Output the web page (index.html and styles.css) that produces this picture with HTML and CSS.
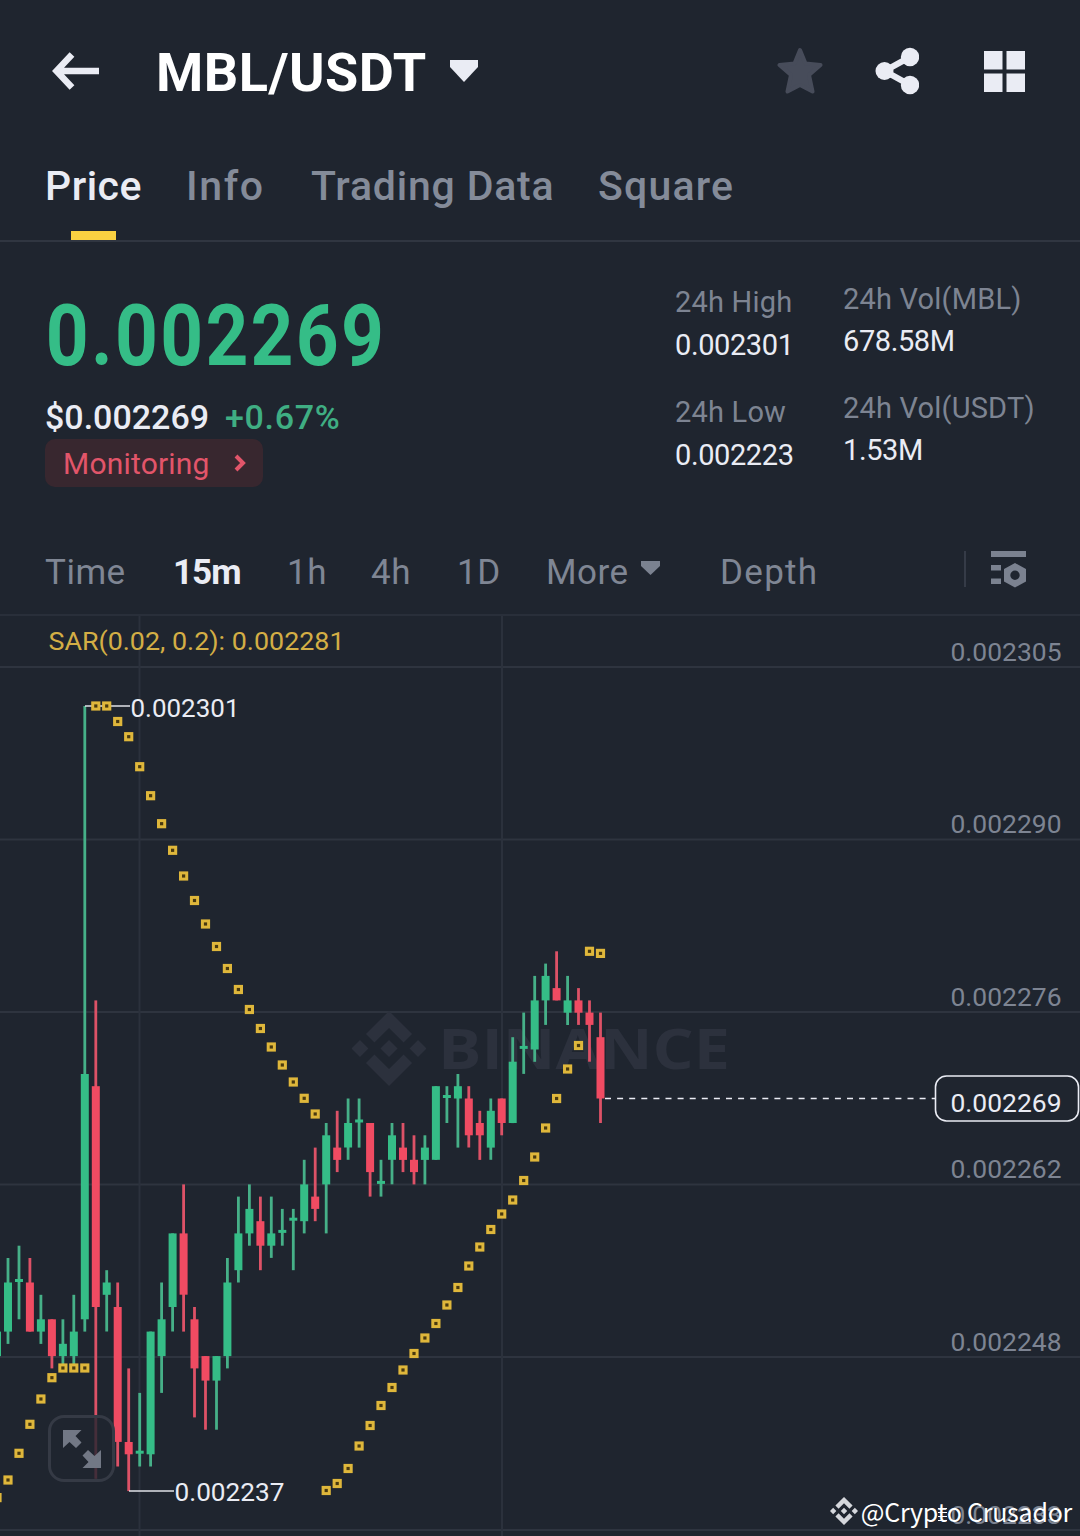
FILE: index.html
```
<!DOCTYPE html>
<html lang="en">
<head>
    <meta charset="UTF-8">
    <title>MBL/USDT</title>
    <link rel="stylesheet" href="styles.css">
</head>

<body>
<div class="header">
    <svg class="back" width="48" height="40" viewBox="0 0 48 40">
        <path d="M20 3.500 4.500 20 20 36.500M4 20h43" fill="none" stroke="#eaecf4" stroke-width="6.500"/>
    </svg>
    <h1 class="pair">MBL/USDT</h1>
    <svg class="caret" width="28" height="22" viewBox="0 0 28 22">
        <path d="M0 0h28v7L14 22 0 7z" fill="#eaecf4"/>
    </svg>
    <svg class="star" width="46" height="48" viewBox="0 0 46 48">
        <path d="M23 3l5.500 13.500 15 1.500-11.500 10 3.500 16.500L23 38l-12.500 6.500L14 28 2.500 18l15-1.500z" fill="#474c5a" stroke="#474c5a" stroke-width="4" stroke-linejoin="round"/>
    </svg>
    <svg class="share" width="44" height="48" viewBox="0 0 44 48">
        <path d="M35 10 9.500 24 35 38" fill="none" stroke="#eaecf4" stroke-width="6"/>
        <circle cx="9.500" cy="24" r="9" fill="#eaecf4"/>
        <circle cx="35" cy="10" r="9.200" fill="#eaecf4"/>
        <circle cx="35" cy="38" r="9.200" fill="#eaecf4"/>
    </svg>
    <svg class="grid" width="41" height="41" viewBox="0 0 41 41">
        <path d="M0 0h18.500v18.500H0zM22.500 0H41v18.500H22.500zM0 22.500h18.500V41H0zM22.500 22.500H41V41H22.500z" fill="#eaecf4"/>
    </svg>
</div>

<ul class="tabs">
    <li class="cur">Price</li>
    <li class="info">Info</li>
    <li class="trading">Trading Data</li>
    <li class="square">Square</li>
</ul>

<div class="ticker">
    <div class="left">
        <p class="price">0.002269</p>
        <p class="fiat"><span class="usd">$0.002269</span><span class="change">+0.67%</span></p>
        <a class="tag" href="javascript:;">Monitoring
            <svg width="12" height="18" viewBox="0 0 12 18">
                <path d="M2 2l7 7-7 7" fill="none" stroke="#e2556a" stroke-width="4"/>
            </svg>
        </a>
    </div>
    <dl class="range">
        <dt>24h High</dt>
        <dd>0.002301</dd>
        <dt>24h Low</dt>
        <dd>0.002223</dd>
    </dl>
    <dl class="vol">
        <dt>24h Vol(MBL)</dt>
        <dd>678.58M</dd>
        <dt>24h Vol(USDT)</dt>
        <dd>1.53M</dd>
    </dl>
</div>

<ul class="times">
    <li class="t-time">Time</li>
    <li class="t-15m cur">15m</li>
    <li class="t-1h">1h</li>
    <li class="t-4h">4h</li>
    <li class="t-1d">1D</li>
    <li class="t-more">More
        <svg width="19" height="14" viewBox="0 0 19 14"><path d="M0 0h19v5l-9.500 9L0 5z" fill="#7b8290"/></svg>
    </li>
    <li class="t-depth">Depth</li>
    <li class="setting">
        <svg width="35" height="37" viewBox="0 0 35 37">
            <path d="M0 0h35v6H0zM0 14h10v5.500H0zM0 27.500h10V33H0z" fill="#7b8290"/>
            <path d="M24 12l11 6v12.500l-11 6-11-6V18zM24 19.500a4.700 4.700 0 1 0 0 9.400 4.700 4.700 0 0 0 0-9.400z" fill="#7b8290" fill-rule="evenodd"/>
        </svg>
    </li>
</ul>

<div class="chart">
    <svg id="kline" width="1080" height="920" viewBox="0 616 1080 920"></svg>
    <a class="expand" href="javascript:;">
        <svg width="38" height="38" viewBox="0 0 38 38">
            <path d="M0 0h18.500l-6 6 6 6.500-5.500 5.500-6.500-6L0 18zM38 38H19.500l6-6-6-6.500 5.500-5.500 6.500 6 6.500-6z" fill="#727885"/>
        </svg>
    </a>
    <p class="author">
        <svg width="28" height="28" viewBox="0 0 126.600 126.600"><use href="#logo" fill="#d5d7dc"/></svg>
        <span>@Cryp<span class="t">t</span>o Crusador</span>
    </p>
</div>

<script>
    var okline=document.getElementById("kline");
    var green="#35bd87";
    var red="#f04b62";
    var step=10.972;
    var html="";

    // body top, body bottom, high, low, 1 = up / 0 = down
    var candles=[
        [2250,2248,2250,2248,1],
        [2254,2250,2256,2249,1],
        [2254,2254,2257,2251,1],
        [2254,2250,2256,2250,0],
        [2251,2250,2253,2249,1],
        [2251,2248,2251,2247,0],
        [2249,2248,2251,2247,1],
        [2250,2248,2253,2247,1],
        [2271,2251,2301,2250,1],
        [2270,2252,2277,2238,0],
        [2254,2253,2255,2250,1],
        [2252,2241,2254,2239,0],
        [2241,2240,2247,2237,0],
        [2240,2240,2245,2239,1],
        [2250,2240,2250,2239,1],
        [2251,2248,2254,2245,1],
        [2258,2252,2258,2250,1],
        [2258,2253,2262,2250,0],
        [2251,2247,2252,2243,0],
        [2248,2246,2248,2242,0],
        [2248,2246,2248,2242,1],
        [2254,2248,2256,2247,1],
        [2258,2255,2261,2254,1],
        [2260,2258,2262,2257,1],
        [2259,2257,2261,2255,0],
        [2258,2257,2261,2256,1],
        [2258,2258,2260,2257,1],
        [2259,2259,2260,2255,1],
        [2262,2259,2264,2258,1],
        [2261,2260,2265,2259,0],
        [2266,2262,2267,2258,1],
        [2265,2264,2268,2263,0],
        [2267,2265,2269,2264,1],
        [2267,2267,2269,2265,1],
        [2267,2263,2267,2261,0],
        [2262,2262,2264,2261,1],
        [2266,2264,2267,2262,1],
        [2265,2264,2267,2263,0],
        [2264,2263,2266,2262,0],
        [2265,2264,2266,2262,1],
        [2270,2264,2270,2264,1],
        [2269,2269,2270,2267,1],
        [2270,2269,2271,2265,1],
        [2269,2266,2270,2265,0],
        [2267,2266,2268,2264,0],
        [2268,2265,2269,2264,1],
        [2269,2267,2269,2266,0],
        [2272,2267,2274,2267,1],
        [2273,2273,2276,2271,1],
        [2277,2273,2279,2272,1],
        [2279,2277,2280,2275,1],
        [2278,2277,2281,2277,0],
        [2277,2276,2279,2275,1],
        [2277,2276,2278,2275,0],
        [2276,2275,2277,2272,0],
        [2274,2269,2276,2267,0]
    ];
    var sar=[
        1497.6,1480,1453.3,1424.3,1399,1377.7,1368,1368,1368,
        706,706,721.5,736.7,766.7,795.7,823.7,850.3,876,900.5,924,946.5,968.5,989.5,
        1009.5,1028.5,1047,1065,1082,1098.3,1114,
        1490.5,1483.5,1468.5,1446,1425.5,1405.5,1387.5,1370,1353.5,1338,1323.5,1305,
        1287.5,1266,1247,1229.5,1214,1200,1180.5,1157,1128,1098.5,1069,1045.5,
        951.3,953.4
    ];
    var axis=[
        ["0.002305",667],
        ["0.002290",839.5],
        ["0.002276",1012],
        ["0.002262",1184.5],
        ["0.002248",1357],
        ["0.002233",1530]
    ];

    function getX(i) {
        return 8+(i-1)*step;
    }
    function getY(p) {
        return 706+(2301-p)*12.266;
    }
    function rect(x,y,w,h,color) {
        return '<rect x="'+x.toFixed(1)+'" y="'+y.toFixed(1)+'" width="'+w+'" height="'+h.toFixed(1)+'" fill="'+color+'"/>';
    }
    function text(str,x,y,w,cls) {
        return '<text class="'+cls+'" x="'+x+'" y="'+y+'" textLength="'+w+'" lengthAdjust="spacingAndGlyphs">'+str+'</text>';
    }

    // grid
    for(var i=0;i<axis.length;i++){
        html+=rect(0,axis[i][1]-1,1080,2,"#2e343f");
        html+=text(axis[i][0],950.5,axis[i][1]-6.5,111,"axis");
    }
    html+=rect(138.5,616,2,920,"#2b313c")+rect(501,616,2,920,"#2b313c");

    // watermark
    html+='<symbol id="logo" viewBox="0 0 126.600 126.600"><path d="M38.730 53.200l24.590-24.580 24.600 24.600 14.300-14.310L63.320 0l-38.900 38.900zM0 63.310l14.300-14.310 14.310 14.310-14.310 14.300zM38.730 73.410l24.590 24.590 24.600-24.600 14.310 14.290-38.900 38.910-38.910-38.880zM98 63.310l14.300-14.310 14.310 14.300-14.310 14.320zM77.830 63.300l-14.510-14.520-14.500 14.520 14.500 14.500z"/></symbol>';
    html+='<use href="#logo" x="351.500" y="1011" width="75" height="75" fill="#2c313d"/>';
    html+=text("BINANCE",438,1069,292,"mark");

    // candles
    for(var i=0;i<candles.length;i++){
        var c=candles[i];
        var color=c[4]?green:red;
        var y=getY(c[0]);
        var h=getY(c[1])-y;
        if(h==0){
            y-=3.5;
            h=3;
        }
        html+=rect(getX(i)-1.4,getY(c[2]),2.8,getY(c[3])-getY(c[2]),c[4]?"#46b088":"#dd5267");
        html+=rect(getX(i)-4,y,8,h,color);
    }

    html+='<path class="tip" d="M85 706h45M129 1491h45"/>';
    // sar
    for(var i=0;i<sar.length;i++){
        html+='<rect class="sar" x="'+(getX(i)-3.1).toFixed(1)+'" y="'+(sar[i]-3.1).toFixed(1)+'" width="6.200" height="6.200"/>';
    }

    html+=text("SAR(0.02, 0.2): 0.002281",48.5,649.5,296,"sar-text");
    html+=text("0.002301",130.5,716.5,109,"val");
    html+=text("0.002237",174.5,1500.5,110,"val");

    // last price
    html+='<path class="dash" d="M605 1098.500h330"/>';
    html+='<rect class="now" x="935.500" y="1076" width="143" height="45" rx="11"/>';
    html+=text("0.002269",950.5,1111.5,111,"val");

    okline.innerHTML=html;
</script>
</body>
</html>
```
FILE: styles.css
```
*{
    padding: 0;
    margin: 0;
    box-sizing: border-box;
}
body{
    width: 1080px;
    height: 1536px;
    overflow: hidden;
    background-color: #1f252f;
    color: #eaecf4;
    font-family: Roboto, "Noto Sans", sans-serif;
}
ul{
    list-style: none;
}
svg{
    display: block;
    flex: none;
}
a{
    text-decoration: none;
}
/* header */
.header{
    display: flex;
    align-items: center;
    height: 142px;
    padding: 0 55px 0 52px;
}
.pair{
    width: 294px;
    margin-left: 54px;
    padding: 4px 0 0 2px;
    font-size: 54px;
    font-weight: 700;
    line-height: 64px;
    letter-spacing: .5px;
    color: #fff;
}
.caret{
    margin-left: 2px;
}
.star{
    margin-left: auto;
}
.share{
    margin-left: 52px;
}
.grid{
    margin-left: 65px;
}
/* tabs */
.tabs{
    display: flex;
    height: 100px;
    padding-left: 45px;
    border-bottom: 2px solid #303641;
    font-size: 41px;
    font-weight: 500;
    line-height: 88px;
    letter-spacing: .5px;
    white-space: nowrap;
    color: #848b99;
}
.tabs .cur{
    position: relative;
    width: 141px;
    color: #eaecf4;
}
.tabs .cur::after{
    content: "";
    position: absolute;
    left: 26px;
    bottom: 0;
    width: 45px;
    height: 9px;
    background-color: #fad141;
}
.tabs .info{
    width: 125px;
    letter-spacing: 1.6px;
}
.tabs .trading{
    width: 287px;
    letter-spacing: .8px;
}
.tabs .square{
    letter-spacing: 1.2px;
}
/* ticker */
.ticker{
    display: flex;
    height: 288px;
    padding: 37px 0 0 45px;
}
.ticker .left{
    width: 630px;
    padding-top: 11px;
}
.price{
    width: 400px;
    padding-left: 1px;
    font-size: 86px;
    font-weight: 700;
    line-height: 92px;
    letter-spacing: 2.6px;
    white-space: nowrap;
    transform: scaleX(.87);
    transform-origin: 0 50%;
    color: #35bd87;
}
.fiat{
    display: flex;
    margin-top: 13px;
    font-size: 34px;
    font-weight: 500;
    line-height: 44px;
}
.fiat .usd{
    width: 180px;
}
.fiat .change{
    color: #3fae83;
    letter-spacing: .7px;
}
.tag{
    display: flex;
    align-items: center;
    justify-content: space-between;
    width: 218px;
    height: 48px;
    padding: 0 17px 0 18px;
    border-radius: 10px;
    background-color: #38272f;
    color: #e2556a;
    font-size: 30px;
    letter-spacing: .2px;
}
.range{
    width: 168px;
    padding-top: 3px;
}
.ticker dt,.ticker dd{
    font-size: 29px;
    line-height: 40px;
    white-space: nowrap;
}
.ticker dt{
    color: #7d8492;
    letter-spacing: .2px;
}
.ticker dd{
    margin: 3px 0 27px;
    letter-spacing: -.4px;
}
.vol dd{
    margin-top: 2px;
}
/* times */
.times{
    display: flex;
    height: 86px;
    border-bottom: 2px solid #292f3a;
    padding: 0 54px 0 45px;
    font-size: 35px;
    line-height: 85px;
    letter-spacing: .5px;
    color: #7f8694;
}
.times .cur{
    font-weight: 700;
    letter-spacing: -1px;
    color: #eaecf4;
}
.t-time{
    width: 128px;
}
.t-15m{
    width: 114px;
}
.t-1h{
    width: 84px;
}
.t-4h{
    width: 86px;
}
.t-1d{
    width: 89px;
}
.t-more{
    display: flex;
    align-items: center;
    gap: 12px;
    width: 174px;
}
.t-more svg{
    margin-top: -8px;
}
.t-depth{
    letter-spacing: 1.3px;
}
.setting{
    height: 36px;
    margin: 21px 0 0 auto;
    padding-left: 25px;
    border-left: 2px solid #353b47;
}
/* chart */
.chart{
    position: relative;
    height: 920px;
}
.chart text{
    font-size: 26.5px;
}
.axis{
    fill: #7d8492;
}
.val{
    fill: #eaecf4;
}
.sar-text{
    fill: #d3ae45;
}
.chart .mark{
    font-family: "Open Sans", sans-serif;
    font-size: 55px;
    font-weight: 700;
    fill: #2c313d;
}
.tip{
    stroke: #dfe1e8;
    stroke-width: 1.6;
}
.sar{
    fill: #49390f;
    stroke: #dfb73b;
    stroke-width: 3;
}
.dash{
    stroke: #eaecf4;
    stroke-width: 1.6;
    stroke-dasharray: 6 6.1;
}
.now{
    fill: #1f252f;
    stroke: #eaecf4;
    stroke-width: 1.6;
}
.expand{
    position: absolute;
    left: 48px;
    top: 799px;
    display: flex;
    align-items: center;
    justify-content: center;
    width: 67px;
    height: 67px;
    border: 3px solid #353a45;
    border-radius: 16px;
    background-color: rgba(31,37,47,.8);
}
.author{
    position: absolute;
    right: 8px;
    bottom: 7px;
    display: flex;
    align-items: center;
    gap: 3px;
    color: #fff;
    font-family: "Noto Sans CJK SC", sans-serif;
    font-size: 25px;
    line-height: 36px;
    letter-spacing: -.25px;
}
.author .t{
    position: relative;
}
/* small bars across the t */
.author .t::after{
    content: "";
    position: absolute;
    left: 0;
    bottom: 7px;
    width: 9px;
    height: 14px;
    background: repeating-linear-gradient(#fff 0 1.5px,transparent 1.5px 4px);
}
```
